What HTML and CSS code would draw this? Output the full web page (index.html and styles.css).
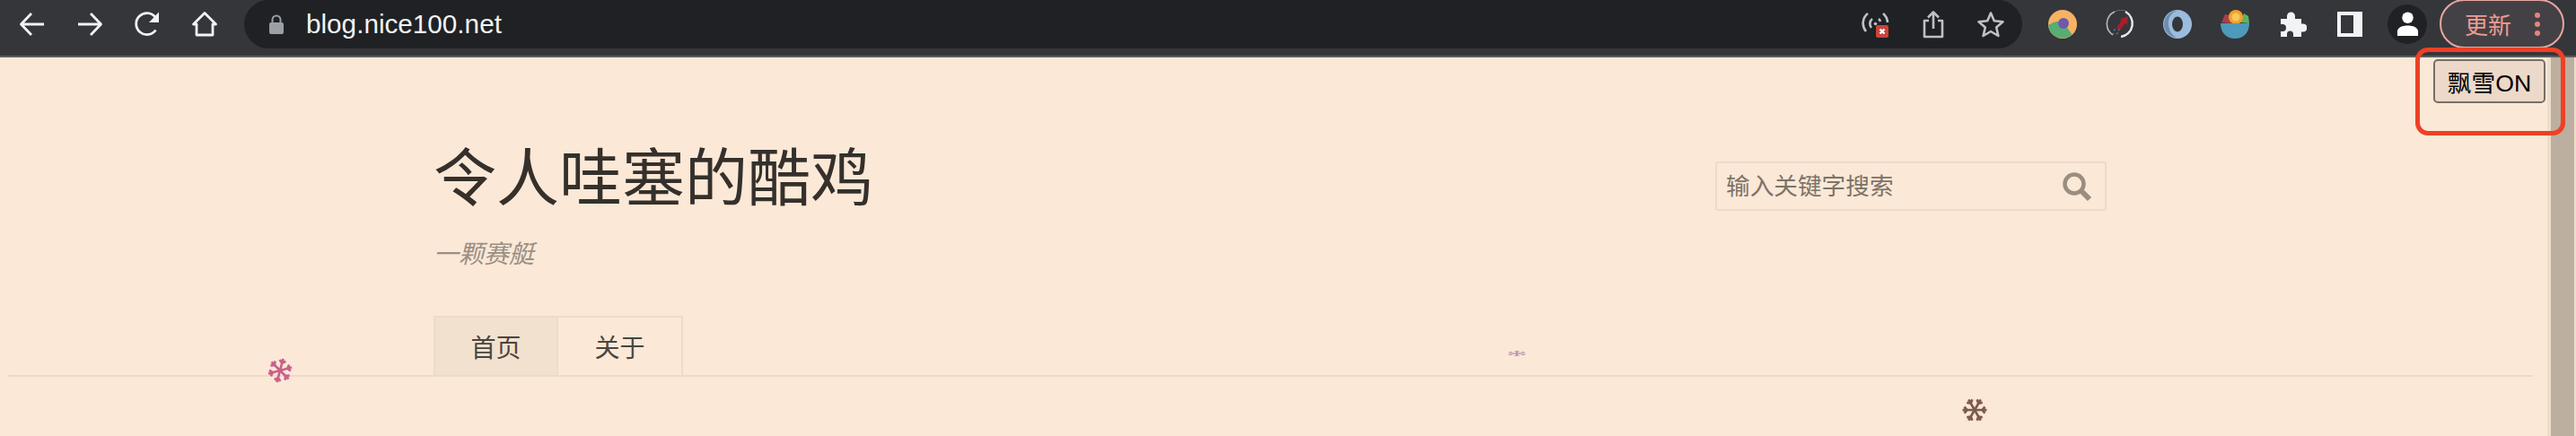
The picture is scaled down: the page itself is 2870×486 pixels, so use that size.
FILE: index.html
```html
<!DOCTYPE html>
<html lang="zh">
<head>
<meta charset="utf-8">
<title>令人哇塞的酷鸡</title>
<link rel="stylesheet" href="styles.css">
</head>
<body>
<svg class="defs" width="0" height="0" aria-hidden="true">
  <symbol id="flake" viewBox="-14 -14 28 28">
    <g fill="none" stroke="currentColor" stroke-width="2.700">
      <g id="a1"><path d="M0 0V-13.500M-3.500-11.500 0-8.500 3.500-11.500"/></g>
      <use href="#a1" transform="rotate(60)"/>
      <use href="#a1" transform="rotate(120)"/>
      <use href="#a1" transform="rotate(180)"/>
      <use href="#a1" transform="rotate(240)"/>
      <use href="#a1" transform="rotate(300)"/>
    </g>
  </symbol>
</svg>
<header class="toolbar">
  <nav class="nav-buttons">
    <span class="tool"><svg class="icon" viewBox="0 0 32 32"><path d="M29 16H4M15 4 3.500 16 15 28"/></svg></span>
    <span class="tool"><svg class="icon" viewBox="0 0 32 32"><path d="M3 16H28M17 4 28.500 16 17 28"/></svg></span>
    <span class="tool"><svg class="icon" viewBox="0 0 32 32"><path d="M25.500 22.500A12 12 0 1 1 25 8L27 10.500"/><path class="solid" d="M29 2.500V14H18Z"/></svg></span>
    <span class="tool"><svg class="icon" viewBox="0 0 32 32"><path d="M3.500 16 16 3.500 28.500 16H25V28H7V16Z"/></svg></span>
  </nav>
  <div class="omnibox">
    <svg class="lock" viewBox="0 0 16 22"><path d="M3.500 10V6a4.500 4.500 0 0 1 9 0v4" fill="none" stroke="#9aa0a6" stroke-width="2"/><rect y="9" width="16" height="13" rx="2" fill="#9aa0a6"/></svg>
    <span class="url">blog.nice100.net</span>
    <span class="omni-actions">
      <span class="tool"><svg class="icon thin" viewBox="0 0 32 32"><path d="M5 24A14 14 0 0 1 7 4M24 4A14 14 0 0 1 29 14M11 20A7 7 0 0 1 12 10M19 10A7 7 0 0 1 21 13"/><circle cx="15.500" cy="15.500" r="1.800" class="fill-grey"/><rect class="badge" x="16" y="17" width="14" height="14" rx="2"/><path class="badge-x" d="M20.500 21.500 25.500 26.500M25.500 21.500 20.500 26.500"/></svg></span>
      <span class="tool"><svg class="icon thin" viewBox="0 0 32 32"><path d="M16 21V3M10 8.500 16 2.500 22 8.500M11 12H6V30H26V12H21"/></svg></span>
      <span class="tool"><svg class="icon thin" viewBox="0 0 32 32"><path d="M16 3.500 19.800 12.300 29.500 13.200 22.200 19.500 24.400 29 16 24 7.600 29 9.800 19.500 2.500 13.200 12.200 12.300Z"/></svg></span>
    </span>
  </div>
  <div class="extensions">
    <span class="tool"><svg class="ext" viewBox="0 0 32 32"><circle cx="16" cy="16" r="16" fill="#f6b264"/><path d="M0 17C8 12 14 12 18 16S26 28 27 27A16 16 0 0 1 0 17Z" fill="#57ad73"/><circle cx="17" cy="15" r="6" fill="#6d58ad"/></svg></span>
    <span class="tool"><svg class="ext" viewBox="0 0 32 32"><path d="M10 2A15 15 0 0 0 8 28" fill="none" stroke="#b9bcc9" stroke-width="1.500"/><path d="M10 2A15 15 0 0 1 24 2" fill="none" stroke="#6a6c74" stroke-width="1"/><path d="M22 2A15 15 0 0 1 17 30" fill="none" stroke="#e6e6e6" stroke-width="2.500"/><path d="M12 20 18 11 15 10 25 7.500 24 17 21.500 14.500 16 23Z" fill="#a51f2c"/><path d="M9 23 10.500 21.500M12 27 13.500 25.500M8 27 9 26M14 23 15 22" stroke="#5b7fb8" stroke-width="1.300"/></svg></span>
    <span class="tool"><svg class="ext" viewBox="0 0 32 32"><circle cx="16" cy="16" r="16" fill="#9bbcdc"/><path d="M1 16A15 15 0 0 1 16 1C9 3 5 9 6 17S12 30 16 31A15 15 0 0 1 1 16Z" fill="#6d8db0"/><ellipse cx="16" cy="16" rx="6" ry="8.500" fill="#35363a"/></svg></span>
    <span class="tool"><svg class="ext" viewBox="0 0 32 32"><path d="M1 14 5 5 11 6 12 15Z" fill="#a6414a"/><path d="M22 14 26 4 31 7 32 15Z" fill="#5fb462"/><circle cx="17" cy="8" r="8" fill="#f3a02f"/><circle cx="17" cy="8" r="4.500" fill="#f8c95e"/><path d="M0 15H32C32 25 26 32 16 32S0 25 0 15Z" fill="#4d9aba"/></svg></span>
    <span class="tool"><svg class="ext" viewBox="0 0 32 32"><path class="white" d="M3 10H10V7A4.500 4.500 0 0 1 19 7V10H26V15.500H28A4.500 4.500 0 0 1 28 24.500H26V30H17V27A3.500 3.500 0 0 0 10 27V30H3V24H5A4 4 0 0 0 5 16H3Z"/></svg></span>
    <span class="tool"><span class="panel"></span></span>
    <span class="tool"><span class="avatar"><svg class="person" viewBox="0 0 26 28"><circle cx="13" cy="7" r="6.500"/><path d="M1 28V23C1 18 7 16 13 16S25 18 25 23V28Z"/></svg></span></span>
  </div>
  <div class="update">
    <span class="update-label">更新</span>
    <span class="dots"><i></i><i></i><i></i></span>
  </div>
</header>

<div class="page">
  <main class="main">
    <div class="head">
      <div class="brand">
        <h1 class="title">令人哇塞的酷鸡</h1>
        <p class="tagline">一颗赛艇</p>
      </div>
      <form class="search">
        <span class="search-text">输入关键字搜索</span>
        <svg class="search-icon" viewBox="0 0 34 34"><circle cx="14" cy="14" r="10.500" fill="none" stroke="#9a8e80" stroke-width="4.500"/><path d="M21 21 31 31" stroke="#9a8e80" stroke-width="6"/></svg>
      </form>
    </div>
    <div class="tabs">
      <a class="tab tab-active">首页</a>
      <a class="tab">关于</a>
    </div>
  </main>
  <div class="scrollbar"></div>
  <button class="snow-toggle" type="button">飘雪ON</button>
  <svg class="flake flake-pink"><use href="#flake"/></svg>
  <svg class="flake flake-thin" viewBox="0 0 28 28" preserveAspectRatio="none"><use href="#flake"/></svg>
  <svg class="flake flake-brown"><use href="#flake"/></svg>
</div>
<div class="annotation"></div>
</body>
</html>
```
FILE: styles.css
```css
* { box-sizing: border-box; }
html, body { margin: 0; padding: 0; }
body {
  position: relative;
  width: 2870px;
  height: 486px;
  overflow: hidden;
  background: #fbe8d7;
  font-family: "Liberation Sans", "Noto Sans CJK SC", sans-serif;
}
.defs { position: absolute; }

/* browser chrome */
.toolbar {
  display: flex;
  align-items: flex-start;
  height: 64px;
  padding-left: 4px;
  background: #35363a;
  border-bottom: 2px solid #5c5d60;
}
.nav-buttons, .extensions, .omni-actions { display: flex; }
.tool {
  display: flex;
  align-items: center;
  justify-content: center;
  width: 64px;
  height: 54px;
  flex: none;
}
.icon {
  width: 32px;
  height: 32px;
  fill: none;
  stroke: #f1f3f4;
  stroke-width: 2.8;
  stroke-linejoin: round;
}
.icon .solid { fill: #f1f3f4; stroke: none; }
.icon.thin { stroke: #bdc1c6; stroke-width: 2.6; }
.fill-grey { fill: #bdc1c6; stroke: none; }
.icon .badge { fill: #c9443a; stroke: none; }
.icon .badge-x { stroke: #fff; stroke-width: 2.4; }
.omnibox {
  display: flex;
  align-items: center;
  width: 1981px;
  height: 54px;
  margin-left: 12px;
  padding-left: 28px;
  background: #202124;
  border-radius: 27px;
}
.lock { width: 16px; height: 22px; flex: none; }
.url {
  margin-left: 25px;
  color: #f1f3f4;
  font-size: 29.700px;
}
.omni-actions { margin-left: auto; margin-right: 3px; }
.extensions { margin-left: 13px; }
.ext { width: 32px; height: 32px; }
.white { fill: #f1f3f4; }
.panel {
  width: 28px;
  height: 28px;
  background: #f1f3f4;
  border: 4px solid #f1f3f4;
  border-right-width: 10px;
  box-shadow: inset 14px 0 0 #35363a;
}
.avatar {
  display: flex;
  align-items: flex-end;
  justify-content: center;
  width: 44px;
  height: 44px;
  padding-bottom: 9px;
  border-radius: 50%;
  background: #202124;
}
.person { width: 25px; height: 27px; fill: #fff; }
.update {
  display: flex;
  align-items: center;
  width: 139px;
  height: 55px;
  margin: -1px 0 0 4px;
  padding-left: 26px;
  background: #444146;
  border: 2px solid #e8a79f;
  border-radius: 28px;
}
.update-label { color: #ec9c92; font-size: 26px; }
.dots {
  display: flex;
  flex-direction: column;
  gap: 4px;
  margin-left: 26px;
}
.dots i {
  display: block;
  width: 6px;
  height: 6px;
  border-radius: 50%;
  background: #e5857a;
}

/* page */
.page {
  position: relative;
  display: flex;
  height: 422px;
}
.main {
  width: 2814px;
  margin-left: 8px;
  margin-right: 16px;
  flex: none;
}
.head {
  display: flex;
  justify-content: space-between;
  align-items: flex-start;
  height: 288px;
  padding: 82px 475px 0;
}
.title {
  margin: 0;
  color: #35302b;
  font: normal 70px/96px "Noto Sans CJK SC", sans-serif;
}
.tagline {
  margin: 19px 0 0;
  color: #9a8f83;
  font: italic 28px/40px "Noto Sans CJK SC", sans-serif;
}
.search {
  display: flex;
  align-items: center;
  justify-content: space-between;
  width: 436px;
  height: 55px;
  margin-top: 34px;
  padding: 0 14px 0 10px;
  border: 2px solid #eddac8;
  border-radius: 3px;
}
.search-text { color: #7d7369; font: 26.670px/36px "Noto Sans CJK SC", sans-serif; margin-bottom: 4px; }
.search-icon { width: 34px; height: 34px; }
.tabs {
  display: flex;
  height: 68px;
  padding-left: 475px;
  border-bottom: 2px solid #eedac7;
}
.tab {
  display: flex;
  align-items: center;
  justify-content: center;
  width: 139px;
  color: #4a4540;
  font: 28px "Noto Sans CJK SC", sans-serif;
  border: 2px solid #eedccb;
  border-bottom: 0;
  border-left-width: 0;
}
.tab-active {
  background: #f3e1cf;
  border-left-width: 2px;
}
.scrollbar {
  width: 32px;
  flex: none;
  background: #bcaf9f;
  border-left: 4px solid #eeddcb;
  border-right: 2px solid #eeddcb;
}
.snow-toggle {
  position: absolute;
  top: 2px;
  right: 34px;
  width: 125px;
  height: 49px;
  padding: 0;
  color: #000;
  background: #ecd9c9;
  border: 2px solid #7a6d65;
  border-radius: 5px;
  font: 26.670px "Liberation Sans", "Noto Sans CJK SC", sans-serif;
}
.flake { position: absolute; }
.flake-pink { left: 298px; top: 335px; width: 28px; height: 28px; color: #c8608a; transform: rotate(15deg); }
.flake-thin { left: 1679px; top: 327px; width: 22px; height: 6px; color: #b894a8; }
.flake-brown { left: 2186px; top: 379px; width: 28px; height: 28px; color: #7d5a4e; transform: rotate(90deg); }
.annotation {
  position: absolute;
  left: 2691px;
  top: 53px;
  width: 167px;
  height: 98px;
  border: 5.500px solid #ee4026;
  border-radius: 14px;
}
```
